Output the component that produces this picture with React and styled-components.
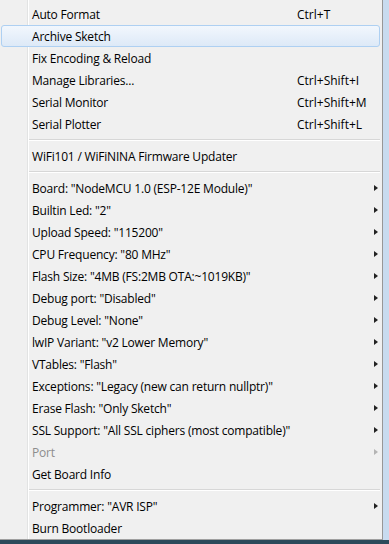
import styled, { createGlobalStyle } from "styled-components";

const GlobalStyle = createGlobalStyle`
  html, body {
    margin: 0;
    padding: 0;
    width: 389px;
    height: 544px;
    overflow: hidden;
    background: #c8dbef;
  }
`;

const Screen = styled.div`
  display: flex;
  flex-direction: column;
  width: 389px;
  height: 544px;
`;

const Menu = styled.div`
  width: 383px;
  height: 540px;
  box-sizing: border-box;
  padding-top: 3px;
  border-right: 1px solid #979797;
  border-bottom: 1px solid #a0a0a0;
  background-color: #f0f0f0;
  background-image: linear-gradient(
    to right,
    transparent 27px,
    #e2e3e3 27px,
    #e2e3e3 28px,
    #ffffff 28px,
    #ffffff 29px,
    transparent 29px
  );
  font-family: "Open Sans", "Noto Sans", sans-serif;
  font-size: 12px;
  letter-spacing: -0.2px;
  color: #000;
`;

const Row = styled.div`
  display: grid;
  grid-template-columns: 265px 1fr 8px;
  align-items: center;
  height: 22px;
  box-sizing: border-box;
  margin: 0 2px 0 1px;
  padding-left: 30px;
  border: 1px solid ${(p) => (p.$active ? "#aed0f2" : "transparent")};
  border-radius: 3px;
  background: ${(p) =>
    p.$active ? "linear-gradient(to bottom, #f2f7fd, #dde9f7)" : "transparent"};
  color: ${(p) => (p.$disabled ? "#8d8d8d" : "#000")};
  white-space: nowrap;
`;

const Shortcut = styled.span`
  letter-spacing: 0;
`;

const Arrow = styled.span`
  width: 0;
  height: 0;
  margin-left: 3px;
  border-top: 3.5px solid transparent;
  border-bottom: 3.5px solid transparent;
  border-left: 4px solid ${(p) => (p.$disabled ? "#b4b4b4" : "#222")};
`;

const Separator = styled.div`
  height: 10px;
  margin-left: 29px;
  margin-right: 2px;
  display: flex;
  flex-direction: column;
  justify-content: center;

  &::before {
    content: "";
    display: block;
    height: 1px;
    background: #d7d7d7;
  }
  &::after {
    content: "";
    display: block;
    height: 1px;
    background: #ffffff;
  }
`;

const Bottom = styled.div`
  height: 4px;
  background: #2c4a5b;
`;

const groups = [
  [
    { label: "Auto Format", key: "Ctrl+T" },
    { label: "Archive Sketch", active: true },
    { label: "Fix Encoding & Reload" },
    { label: "Manage Libraries...", key: "Ctrl+Shift+I" },
    { label: "Serial Monitor", key: "Ctrl+Shift+M" },
    { label: "Serial Plotter", key: "Ctrl+Shift+L" },
  ],
  [{ label: "WiFi101 / WiFiNINA Firmware Updater" }],
  [
    { label: 'Board: "NodeMCU 1.0 (ESP-12E Module)"', sub: true },
    { label: 'Builtin Led: "2"', sub: true },
    { label: 'Upload Speed: "115200"', sub: true },
    { label: 'CPU Frequency: "80 MHz"', sub: true },
    { label: 'Flash Size: "4MB (FS:2MB OTA:~1019KB)"', sub: true },
    { label: 'Debug port: "Disabled"', sub: true },
    { label: 'Debug Level: "None"', sub: true },
    { label: 'lwIP Variant: "v2 Lower Memory"', sub: true },
    { label: 'VTables: "Flash"', sub: true },
    { label: 'Exceptions: "Legacy (new can return nullptr)"', sub: true },
    { label: 'Erase Flash: "Only Sketch"', sub: true },
    { label: 'SSL Support: "All SSL ciphers (most compatible)"', sub: true },
    { label: "Port", sub: true, disabled: true },
    { label: "Get Board Info" },
  ],
  [
    { label: 'Programmer: "AVR ISP"', sub: true },
    { label: "Burn Bootloader" },
  ],
];

export default function App() {
  return (
    <>
      <GlobalStyle />
      <Screen>
        <Menu>
          {groups.map((items, gi) => (
            <div key={gi}>
              {gi > 0 && <Separator />}
              {items.map((it) => (
                <Row key={it.label} $active={it.active} $disabled={it.disabled}>
                  <span>{it.label}</span>
                  <Shortcut>{it.key || ""}</Shortcut>
                  {it.sub ? <Arrow $disabled={it.disabled} /> : <span />}
                </Row>
              ))}
            </div>
          ))}
        </Menu>
        <Bottom />
      </Screen>
    </>
  );
}
